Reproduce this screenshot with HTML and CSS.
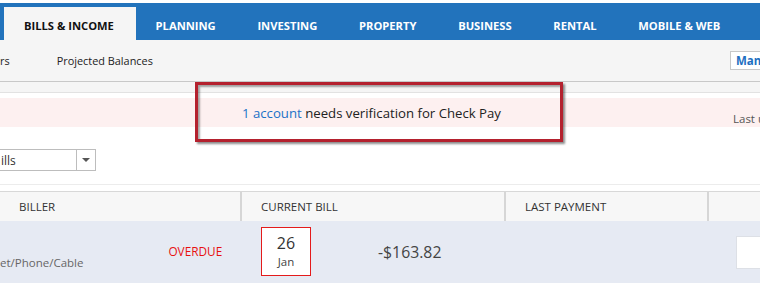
FILE: index.html
```html
<!DOCTYPE html>
<html lang="en">

<head>
    <meta charset="UTF-8">
    <meta name="viewport" content="width=device-width, initial-scale=1.0">
    <title>Bills &amp; Income</title>
    <link rel="stylesheet" href="styles.css">
</head>

<body>
    <div class="page">
        <nav class="tabs">
            <a class="tab active">BILLS &amp; INCOME</a>
            <a class="tab">PLANNING</a>
            <a class="tab">INVESTING</a>
            <a class="tab">PROPERTY</a>
            <a class="tab">BUSINESS</a>
            <a class="tab">RENTAL</a>
            <a class="tab">MOBILE &amp; WEB</a>
        </nav>

        <div class="subnav">
            <a class="sub-link first">rs</a>
            <a class="sub-link">Projected Balances</a>
            <button class="manage">Manage</button>
        </div>
        <div class="strip"></div>

        <div class="alert">
            <p class="alert-text"><a class="link">1 account</a> needs verification for Check Pay</p>
            <span class="updated">Last updated</span>
        </div>

        <div class="filter">
            <div class="select">
                <span class="select-value">ills</span>
                <span class="select-arrow"></span>
            </div>
        </div>

        <div class="table">
            <div class="thead">
                <div class="th col-biller">BILLER</div>
                <div class="th col-current">CURRENT BILL</div>
                <div class="th col-last">LAST PAYMENT</div>
                <div class="th col-rest"></div>
            </div>
            <div class="row">
                <div class="col-biller cell-biller">
                    <span class="biller-type">et/Phone/Cable</span>
                    <span class="status">OVERDUE</span>
                </div>
                <div class="col-current cell-current">
                    <div class="due-date">
                        <span class="day">26</span>
                        <span class="month">Jan</span>
                    </div>
                    <span class="amount">-$163.82</span>
                </div>
                <div class="col-last"></div>
                <div class="col-rest cell-rest">
                    <div class="pay-box"></div>
                </div>
            </div>
        </div>

        <!-- annotation box drawn over the alert -->
        <div class="callout"></div>
    </div>
</body>

</html>
```

FILE: styles.css
```css
body {
    margin: 0;
    background: #fff;
    font-family: "Open Sans", "Noto Sans", sans-serif;
    color: #222;
    overflow: hidden;
}

.page {
    position: relative;
    width: 760px;
    height: 283px;
    overflow: hidden;
}

/* top tabs */
.tabs {
    display: flex;
    align-items: flex-end;
    height: 37px;
    margin-top: 3px;
    padding-left: 4px;
    background: #2273bc;
}

.tab {
    height: 33px;
    padding: 3px 21.7px 0 20px;
    box-sizing: border-box;
    display: flex;
    align-items: center;
    color: #fff;
    font-size: 11.2px;
    font-weight: 700;
    white-space: nowrap;
}

.tab.active {
    background: #f5f5f5;
    color: #111;
}

/* sub navigation */
.subnav {
    display: flex;
    align-items: center;
    height: 42px;
    padding-bottom: 1px;
    box-sizing: border-box;
    background: #f5f5f5;
    border-bottom: 1px solid #c8c8c8;
    font-size: 10.9px;
    color: #222;
}

.sub-link {
    margin-right: 47px;
    white-space: nowrap;
}

.manage {
    margin-left: auto;
    margin-right: -30px;
    width: 60px;
    height: 19px;
    padding: 0 5px;
    text-align: left;
    border: 1px solid #c8c8c8;
    background: #fff;
    color: #1d6fc1;
    font-family: inherit;
    font-size: 11.5px;
    font-weight: 700;
}

.strip {
    height: 10px;
    background: #f5f5f5;
    border-bottom: 1px solid #e2e2e2;
}

/* verification alert */
.alert {
    display: flex;
    align-items: center;
    height: 29px;
    margin-top: 5px;
    padding-left: 242px;
    background: #fdf0f0;
}

.alert-text {
    margin: 0;
    font-size: 13.2px;
    color: #222;
    white-space: nowrap;
}

.link {
    color: #1a72c7;
}

.updated {
    margin-left: auto;
    margin-right: -60px;
    padding-top: 12px;
    width: 87px;
    font-size: 11.5px;
    color: #555;
    white-space: nowrap;
}

/* filter select */
.filter {
    height: 58px;
    padding-top: 22px;
    box-sizing: border-box;
    border-bottom: 1px solid #ececec;
}

.select {
    display: flex;
    width: 97px;
    height: 22px;
    margin-left: -1px;
    box-sizing: border-box;
    border: 1px solid #bdbdbd;
    background: #fff;
}

.select-value {
    flex: 1;
    padding-left: 1px;
    font-size: 12px;
    line-height: 21px;
    color: #333;
}

.select-arrow {
    width: 18px;
    border-left: 1px solid #bdbdbd;
    position: relative;
}

.select-arrow::after {
    content: "";
    position: absolute;
    left: 5px;
    top: 8px;
    border-left: 4px solid transparent;
    border-right: 4px solid transparent;
    border-top: 4px solid #555;
}

/* bills table */
.table {
    margin-top: 6px;
}

.thead {
    display: flex;
    height: 29px;
    border-top: 1px solid #d8d8d8;
    background: #f7f7f7;
}

.th {
    display: flex;
    align-items: center;
    padding-left: 19px;
    box-sizing: border-box;
    font-size: 11.5px;
    color: #333;
    white-space: nowrap;
}

.col-biller {
    width: 240px;
    flex: none;
}

.col-current {
    width: 264px;
    flex: none;
}

.col-last {
    width: 203px;
    flex: none;
}

.col-rest {
    flex: 1;
}

.th.col-current,
.th.col-last,
.th.col-rest {
    border-left: 2px solid #d6d6d6;
}

.row {
    display: flex;
    height: 62px;
    background: #e6eaf3;
}

.cell-biller {
    display: flex;
    align-items: flex-start;
}

.biller-type {
    margin-top: 34px;
    font-size: 11.5px;
    color: #666;
    white-space: nowrap;
}

.status {
    margin-left: 85px;
    margin-top: 22px;
    font-size: 11.8px;
    color: #e81010;
}

.cell-current {
    display: flex;
    align-items: flex-start;
    padding-left: 21px;
    box-sizing: border-box;
}

.due-date {
    display: flex;
    flex-direction: column;
    align-items: center;
    width: 50px;
    height: 49px;
    margin-top: 6px;
    box-sizing: border-box;
    border: 1px solid #e41b1b;
    background: #fff;
    padding-top: 6px;
}

.day {
    font-size: 16px;
    line-height: 19px;
    color: #333;
}

.month {
    font-size: 11.5px;
    line-height: 18px;
    color: #444;
}

.amount {
    margin-left: 67px;
    margin-top: 20px;
    font-size: 15.8px;
    color: #444;
}

.cell-rest {
    display: flex;
    justify-content: flex-end;
}

.pay-box {
    width: 23px;
    height: 31px;
    margin-top: 15px;
    background: #fff;
    border: 1px solid #dde0e6;
    border-right: 0;
}

/* red annotation rectangle */
.callout {
    position: absolute;
    left: 195px;
    top: 82px;
    width: 368px;
    height: 60px;
    box-sizing: border-box;
    border: 3px solid #b4212e;
    box-shadow: 2px 2px 2px rgba(0, 0, 0, 0.45), inset 2px 2px 2px rgba(0, 0, 0, 0.35);
}
```
